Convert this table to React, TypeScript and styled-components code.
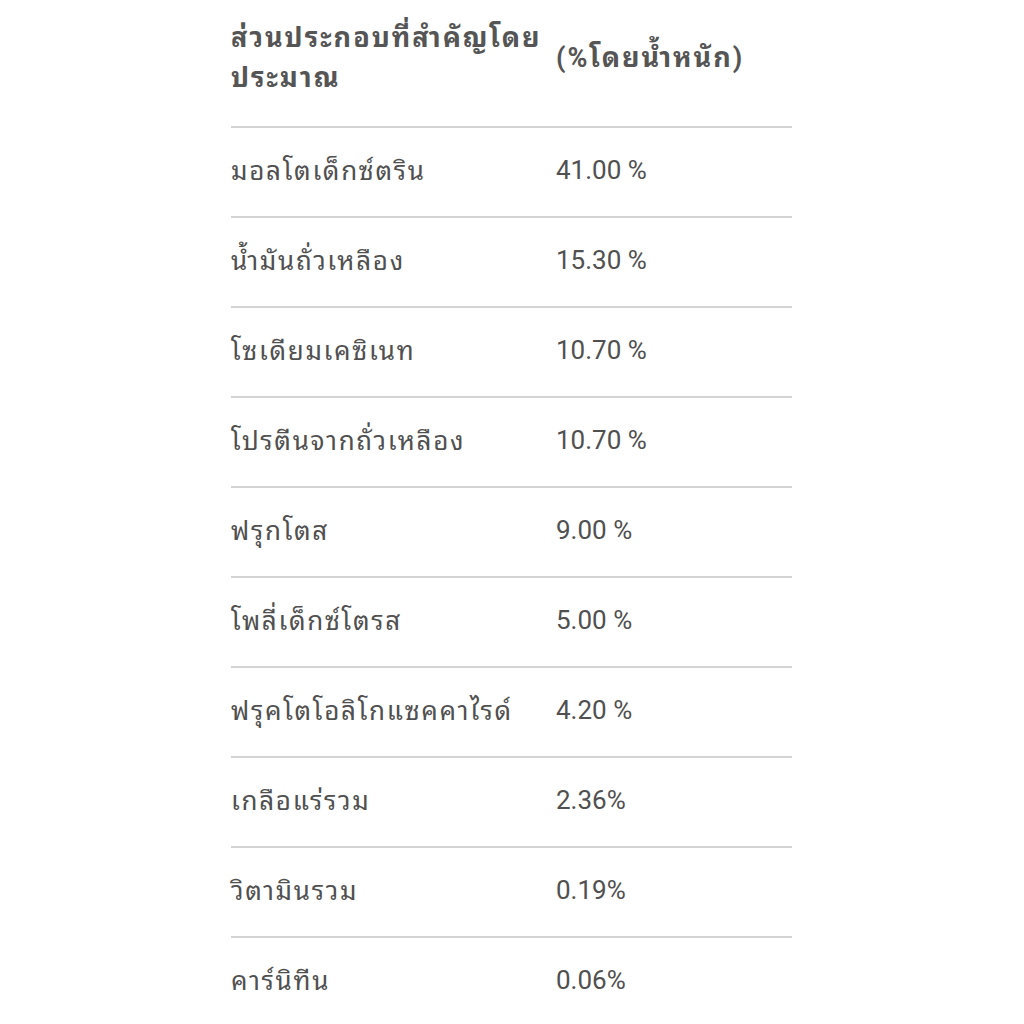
import React from "react";
import styled, { createGlobalStyle } from "styled-components";

const GlobalStyle = createGlobalStyle`
  html, body {
    margin: 0;
    padding: 0;
    background: #ffffff;
  }
  body {
    font-family: Roboto, "Noto Sans Thai Looped", Loma, Garuda, "Tlwg Typo", Norasi, "Noto Sans Thai", "Noto Sans", sans-serif;
    color: #505050;
  }
`;

const Page = styled.div`
  width: 1024px;
  height: 1024px;
  overflow: hidden;
  padding-left: 231px;
  box-sizing: border-box;
`;

const Table = styled.table`
  width: 561px;
  border-collapse: collapse;
  table-layout: fixed;
`;

const HeadCell = styled.th<{ $wide?: boolean }>`
  width: ${(p) => (p.$wide ? "325px" : "auto")};
  height: 116px;
  padding: 0 0 10px 0;
  text-align: left;
  vertical-align: middle;
  font-size: 27px;
  line-height: 40px;
  font-weight: 700;
  letter-spacing: 2px;
  color: #555555;
  border-bottom: 2px solid #d4d4d4;
`;

const Row = styled.tr`
  & + & td {
    border-top: 2px solid #d4d4d4;
  }
`;

const Cell = styled.td<{ $num?: boolean }>`
  height: ${(p) => (p.$num ? "84px" : "80px")};
  padding: 0 0 ${(p) => (p.$num ? "4px" : "8px")} 0;
  vertical-align: middle;
  font-size: 26px;
  letter-spacing: ${(p) => (p.$num ? "0" : "1.7px")};
  color: #505050;
  white-space: nowrap;
`;

const rows: [string, string][] = [
  ["มอลโตเด็กซ์ตริน", "41.00 %"],
  ["น้ำมันถั่วเหลือง", "15.30 %"],
  ["โซเดียมเคซิเนท", "10.70 %"],
  ["โปรตีนจากถั่วเหลือง", "10.70 %"],
  ["ฟรุกโตส", "9.00 %"],
  ["โพลี่เด็กซ์โตรส", "5.00 %"],
  ["ฟรุคโตโอลิโกแซคคาไรด์", "4.20 %"],
  ["เกลือแร่รวม", "2.36%"],
  ["วิตามินรวม", "0.19%"],
  ["คาร์นิทีน", "0.06%"],
];

const App: React.FC = () => {
  return (
    <Page>
      <GlobalStyle />
      <Table>
        <thead>
          <tr>
            <HeadCell $wide>
              ส่วนประกอบที่สำคัญโดย
              <br />
              ประมาณ
            </HeadCell>
            <HeadCell>(%โดยน้ำหนัก)</HeadCell>
          </tr>
        </thead>
        <tbody>
          {rows.map(([name, value]) => (
            <Row key={name}>
              <Cell>{name}</Cell>
              <Cell $num>{value}</Cell>
            </Row>
          ))}
        </tbody>
      </Table>
    </Page>
  );
};

export default App;
